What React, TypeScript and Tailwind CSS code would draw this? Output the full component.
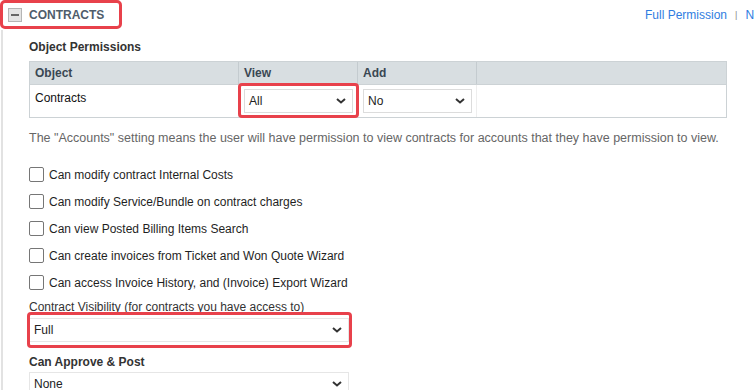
import React from 'react';

const Chevron = () => (
  <svg width="10" height="6" viewBox="0 0 10 6" className="shrink-0">
    <path d="M1 1l4 3.5L9 1" fill="none" stroke="#333" strokeWidth="2" />
  </svg>
);

const Select = ({ value, className }: { value: string; className: string }) => (
  <div className={`flex items-center justify-between border border-[#dcdcdc] bg-white pl-[4px] pr-[6px] text-[12px] text-[#222] ${className}`}>
    <span>{value}</span>
    <Chevron />
  </div>
);

const permissions = [
  'Can modify contract Internal Costs',
  'Can modify Service/Bundle on contract charges',
  'Can view Posted Billing Items Search',
  'Can create invoices from Ticket and Won Quote Wizard',
  'Can access Invoice History, and (Invoice) Export Wizard',
];

export default function App() {
  return (
    <div className="w-[755px] h-[390px] overflow-hidden bg-white font-['Liberation_Sans',Arial,sans-serif] text-[12px] leading-[14px] text-[#222]">
      {/* header */}
      <div className="flex h-[30px] items-start">
        <div className="flex h-[29px] w-[122px] shrink-0 items-center gap-[7px] rounded-[5px] border-[3px] border-[#e8414b] pl-[5px]">
          <div className="flex h-[14px] w-[14px] items-center justify-center border border-[#b5b5b5] bg-[#e4e4e4]">
            <div className="h-[2px] w-[8px] bg-[#666]" />
          </div>
          <span className="font-bold text-[#4f5d6b]">CONTRACTS</span>
        </div>
        <div className="ml-[523px] mt-[8px] flex shrink-0 items-center whitespace-nowrap text-[#2f7de1]">
          <span>Full Permission</span>
          <span className="mx-[8px] text-[9px] text-[#888]">|</span>
          <span>N</span>
        </div>
      </div>

      {/* body */}
      <div className="ml-[1px] h-[360px] border-l-2 border-[#e2e2e2] pl-[26px]">
        <div className="pt-[10px] font-bold text-[#333]">Object Permissions</div>

        <div className="mt-[7px] w-[698px] border border-[#ccd2d5]">
          <div className="flex h-[22px] bg-[#d8dee1] font-bold text-[#3a4753]">
            <div className="flex w-[209px] items-center border-r border-[#c4cbcf] pl-[5px]">Object</div>
            <div className="flex w-[119px] items-center border-r border-[#c4cbcf] pl-[5px]">View</div>
            <div className="flex w-[119px] items-center border-r border-[#c4cbcf] pl-[5px]">Add</div>
            <div className="flex-1" />
          </div>
          <div className="flex h-[33px] border-t border-[#ccd2d5]">
            <div className="w-[209px] border-r border-[#eee] pl-[5px] pt-[6px] text-[#111]">Contracts</div>
            <div className="w-[119px] border-r border-[#eee]">
              <div className="-ml-[1px] -mt-[2px] flex h-[35px] w-[121px] items-center rounded-[4px] border-[3px] border-[#e8414b] pl-[3px]">
                <Select value="All" className="h-[24px] w-[109px]" />
              </div>
            </div>
            <div className="w-[119px] border-r border-[#eee] pl-[5px] pt-[4px]">
              <Select value="No" className="h-[24px] w-[109px]" />
            </div>
            <div className="flex-1" />
          </div>
        </div>

        <div className="mt-[13px] text-[12.5px] text-[#666]">
          The "Accounts" setting means the user will have permission to view contracts for accounts that they have permission to view.
        </div>

        <div className="mt-[16px] flex flex-col">
          {permissions.map((p) => (
            <div key={p} className="flex h-[27px] items-center gap-[5px]">
              <div className="h-[15px] w-[15px] rounded-[2px] border border-[#767676] bg-white" />
              <span className="text-[#1f1f1f]">{p}</span>
            </div>
          ))}
        </div>

        <div className="mt-[4px] text-[#333]">Contract Visibility (for contracts you have access to)</div>
        <div className="relative mt-[4px] w-[320px]">
          <Select value="Full" className="h-[24px] w-[320px] border-[#e6e6e6]" />
          <div className="absolute -left-[2px] -right-[3px] -top-[6px] -bottom-[6px] rounded-[4px] border-[3px] border-[#e8414b]" />
        </div>

        <div className="mt-[13px] font-bold text-[#333]">Can Approve &amp; Post</div>
        <Select value="None" className="mt-[3px] h-[24px] w-[320px] border-[#e6e6e6]" />
      </div>
    </div>
  );
}
